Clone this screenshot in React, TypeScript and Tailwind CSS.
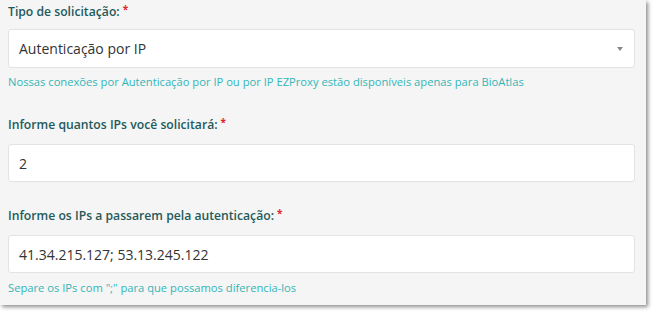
const Label = ({ text }: { text: string }) => (
  <label className="flex items-start gap-[3px] text-[12.2px] font-semibold leading-[16px] text-[#245a5b]">
    {text}
    <span className="text-[10px] font-bold leading-[10px] text-[#e3262b]">*</span>
  </label>
);

const Help = ({ text }: { text: string }) => (
  <p className="text-[11.2px] leading-[14px] text-[#32b6b8]">{text}</p>
);

const Field = ({ value }: { value: string }) => (
  <div className="flex h-[38px] items-center rounded-[3px] border border-[#e3e3e3] bg-white px-[10px] text-[14px] text-[#333]">
    {value}
  </div>
);

export default function App() {
  return (
    <div className="h-[315px] w-[653px] bg-white font-['Open_Sans',sans-serif]">
      <div className="flex h-[305px] w-[646px] flex-col bg-[#f5f5f5] pl-[8px] pr-[11px] pt-[4px] shadow-[2px_2px_4px_rgba(0,0,0,0.45)]">
        <Label text="Tipo de solicitação:" />
        <div className="mt-[9px] flex h-[39px] items-center justify-between rounded-[3px] border border-[#e3e3e3] bg-white pl-[10px] pr-[10px] text-[14px] text-[#333]">
          <span>Autenticação por IP</span>
          <span className="mr-[1px] h-0 w-0 border-x-[3px] border-t-[4px] border-x-transparent border-t-[#888]" />
        </div>
        <div className="mt-[7px]">
          <Help text="Nossas conexões por Autenticação por IP ou por IP EZProxy estão disponíveis apenas para BioAtlas" />
        </div>
        <div className="mt-[28px]">
          <Label text="Informe quantos IPs você solicitará:" />
        </div>
        <div className="mt-[11px]">
          <Field value="2" />
        </div>
        <div className="mt-[26px]">
          <Label text="Informe os IPs a passarem pela autenticação:" />
        </div>
        <div className="mt-[11px]">
          <Field value="41.34.215.127; 53.13.245.122" />
        </div>
        <div className="mt-[8px]">
          <Help text='Separe os IPs com ";" para que possamos diferencia-los' />
        </div>
      </div>
    </div>
  );
}
